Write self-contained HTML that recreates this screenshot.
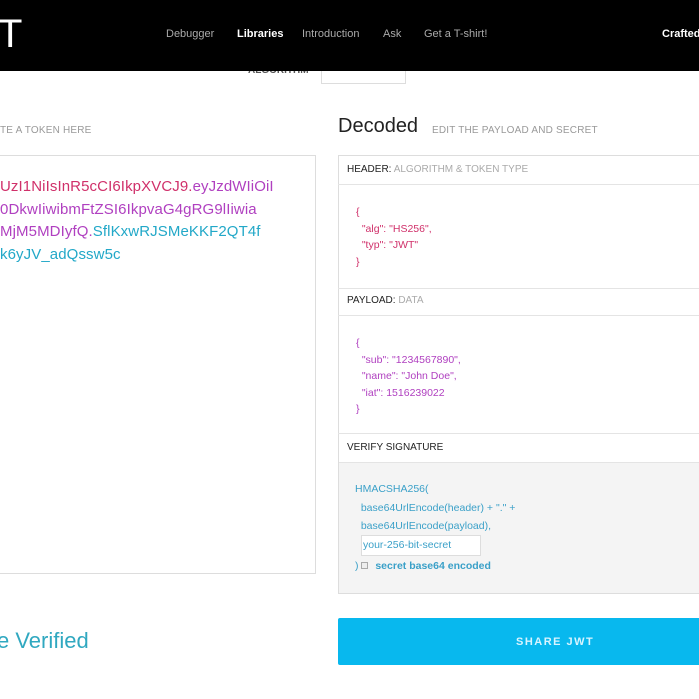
<!DOCTYPE html>
<html><head><meta charset="utf-8"><style>
*{margin:0;padding:0;box-sizing:border-box}
body{width:699px;height:699px;overflow:hidden;background:#fff;font-family:"Liberation Sans",sans-serif;position:relative}
.a{position:absolute;white-space:nowrap}
.nav{position:absolute;left:0;top:0;width:699px;height:71px;background:#000;z-index:2}
.nav .l{font-size:11px;color:#aaa;top:28px}
.lbl{font-size:10px;color:#999;letter-spacing:.2px}
.mono{font-size:10.5px}
.k{color:#d0306a}.p{color:#b040c0}
</style></head><body>
<div class="nav">
<div class="a" style="left:-2px;top:12px;font-size:40px;color:#fff;font-weight:300">T</div>
<div class="a l" style="left:166px">Debugger</div>
<div class="a l" style="left:237px;color:#fff;font-weight:bold">Libraries</div>
<div class="a l" style="left:302px">Introduction</div>
<div class="a l" style="left:383px">Ask</div>
<div class="a l" style="left:424px">Get a T-shirt!</div>
<div class="a l" style="left:662px;color:#fff;font-weight:bold">Crafted</div>
</div>
<div class="a" style="left:248px;top:65px;font-size:10px;color:#555;font-weight:bold">ALGORITHM</div>
<div class="a" style="left:321px;top:68px;width:85px;height:16px;border:1px solid #ddd;border-top:none;background:#fff"></div>
<div class="a lbl" style="left:0;top:125px">TE A TOKEN HERE</div>
<div class="a" style="left:338px;top:115px;font-size:20px;color:#222">Decoded</div>
<div class="a lbl" style="left:432px;top:125px">EDIT THE PAYLOAD AND SECRET</div>
<div class="a" style="left:-5px;top:155px;width:321px;height:419px;border:1px solid #ddd"></div>
<div class="a" style="left:0;top:176px;font-size:15px;line-height:22.5px;letter-spacing:0.1px">
<span style="color:#d0306a">UzI1NiIsInR5cCI6IkpXVCJ9.</span><span class="p">eyJzdWIiOiI</span><br>
<span class="p">0DkwIiwibmFtZSI6IkpvaG4gRG9lIiwia</span><br>
<span class="p">MjM5MDIyfQ.</span><span style="color:#22a8c8">SflKxwRJSMeKKF2QT4f</span><br>
<span style="color:#22a8c8">k6yJV_adQssw5c</span></div>
<div class="a" style="left:-3px;top:628px;font-size:22px;color:#30a8c0">e Verified</div>

<div class="a" style="left:338px;top:155px;width:370px;height:439px;border:1px solid #ddd"></div>
<div class="a" style="left:338px;top:184px;width:370px;height:1px;background:#e4e4e4"></div>
<div class="a" style="left:338px;top:288px;width:370px;height:1px;background:#e4e4e4"></div>
<div class="a" style="left:338px;top:315px;width:370px;height:1px;background:#e4e4e4"></div>
<div class="a" style="left:338px;top:433px;width:370px;height:1px;background:#e4e4e4"></div>
<div class="a" style="left:339px;top:462px;width:370px;height:131px;background:#f4f4f4;border-top:1px solid #e4e4e4"></div>
<div class="a" style="left:347px;top:164px;font-size:10px;color:#222">HEADER: <span style="color:#aaa">ALGORITHM &amp; TOKEN TYPE</span></div>
<div class="a" style="left:347px;top:295px;font-size:10px;color:#222">PAYLOAD: <span style="color:#aaa">DATA</span></div>
<div class="a" style="left:347px;top:442px;font-size:10px;color:#222">VERIFY SIGNATURE</div>
<div class="a mono k" style="left:356px;top:204px;line-height:16.5px">{<br>&nbsp;&nbsp;"alg": "HS256",<br>&nbsp;&nbsp;"typ": "JWT"<br>}</div>
<div class="a mono p" style="left:356px;top:335px;line-height:16.5px">{<br>&nbsp;&nbsp;"sub": "1234567890",<br>&nbsp;&nbsp;"name": "John Doe",<br>&nbsp;&nbsp;"iat": 1516239022<br>}</div>
<div class="a" style="left:355px;top:480px;font-size:10.5px;line-height:18.5px;color:#3aa0c8">HMACSHA256(<br>&nbsp;&nbsp;base64UrlEncode(header) + "." +<br>&nbsp;&nbsp;base64UrlEncode(payload),</div>
<div class="a" style="left:361px;top:535px;width:120px;height:21px;background:#fff;border:1px solid #ddd;font-size:10.5px;color:#3aa0c8;padding:3px 1px">your-256-bit-secret</div>
<div class="a" style="left:355px;top:560px;font-size:10.5px;color:#3aa0c8">) <span style="display:inline-block;width:7px;height:7px;border:1px solid #aaa;background:#eee"></span> <b style="margin-left:4px">secret base64 encoded</b></div>
<div class="a" style="left:338px;top:618px;width:370px;height:47px;background:#08b8ee;border-radius:2px"></div>
<div class="a" style="left:516px;top:636px;font-size:11px;color:#d8f4ff;font-weight:bold;letter-spacing:1.5px">SHARE JWT</div>
</body></html>
